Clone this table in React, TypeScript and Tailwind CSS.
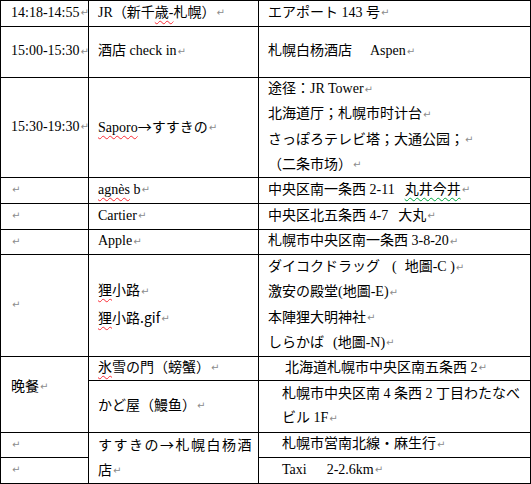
import React from 'react';
import clsx from 'clsx';

// paragraph mark, as Word shows it
const P = () => (
  <span className="ml-[1px] text-[10px] text-[#8c8c8c] font-['DejaVu_Sans',sans-serif] align-middle">↵</span>
);

const Red = ({ children }: { children: React.ReactNode }) => (
  <span className="underline decoration-wavy decoration-red-500 decoration-1 underline-offset-[3px]">{children}</span>
);

const Green = ({ children }: { children: React.ReactNode }) => (
  <span className="underline decoration-wavy decoration-green-600 decoration-1 underline-offset-[3px]">{children}</span>
);

const Gap = ({ w }: { w: string }) => <span className={clsx('inline-block', w)} />;

const Cell = ({ children, className }: { children?: React.ReactNode; className?: string }) => (
  <div className={clsx('bg-white flex items-center pl-[9px] overflow-hidden', className)}>
    <div className="whitespace-pre leading-[24.6px]">{children}</div>
  </div>
);

const cjk = "font-['Noto_Sans_CJK_JP',sans-serif]";

export default function App() {
  return (
    <div className="w-[531px] h-[484px] bg-white text-[14px] text-black font-['Liberation_Serif','Noto_Sans_CJK_JP',serif]">
      <div className="grid grid-cols-[87px_169px_271px] grid-rows-[25px_50px_99px_25px_25px_24px_101px_23px_51px_24px_25px] gap-px bg-black p-px">
        <Cell className="pl-[10px]">14:18-14:55<P /></Cell>
        <Cell>JR（新千<Red>歳-</Red>札幌）<P /></Cell>
        <Cell>エアポート 143 号<P /></Cell>

        <Cell className="pl-[10px]">15:00-15:30<P /></Cell>
        <Cell>酒店 check in<P /></Cell>
        <Cell>札幌白杨酒店<Gap w="w-[18px]" />Aspen<P /></Cell>

        <Cell className="pl-[10px]">15:30-19:30<P /></Cell>
        <Cell><Red>Saporo</Red><span className={cjk}>→</span>すすきの<P /></Cell>
        <Cell>
          <div>途径：JR Tower<P /></div>
          <div>北海道厅；札幌市时计台<P /></div>
          <div>さっぽろテレビ塔；大通公园；<P /></div>
          <div>（二条市场）<P /></div>
        </Cell>

        <Cell className="pl-[10px]"><P /></Cell>
        <Cell><Red>agnès</Red> b<P /></Cell>
        <Cell>中央区南一条西 2-11<Gap w="w-[10px]" /><Green>丸井今井</Green><P /></Cell>

        <Cell className="pl-[10px]"><P /></Cell>
        <Cell>Cartier<P /></Cell>
        <Cell>中央区北五条西 4-7<Gap w="w-[10px]" />大丸<P /></Cell>

        <Cell className="pl-[10px]"><P /></Cell>
        <Cell>Apple<P /></Cell>
        <Cell>札幌市中央区南一条西 3-8-20<P /></Cell>

        <Cell className="pl-[10px]"><P /></Cell>
        <Cell>
          <div><Red>狸</Red>小路<P /></div>
          <div><Red>狸</Red>小路<span className={cjk}>.gif</span><P /></div>
        </Cell>
        <Cell>
          <div>ダイコクドラッグ<Gap w="w-[12px]" />(<Gap w="w-[8px]" />地圖-C )<P /></div>
          <div>激安の殿堂(地圖-E)<P /></div>
          <div>本陣狸大明神社<P /></div>
          <div>しらかば<Gap w="w-[9px]" />(地圖-N)<P /></div>
        </Cell>

        <Cell className="row-span-2 pl-[10px] pb-[14px]">晚餐<P /></Cell>
        <Cell><Red>氷</Red>雪の門（螃蟹）<P /></Cell>
        <Cell className="pl-[26px]">北海道札幌市中央区南五条西 2<P /></Cell>
        <Cell>かど屋（鰻鱼）<P /></Cell>
        <Cell className="pl-[23px]">
          <div>札幌市中央区南 4 条西 2 丁目わたなべ</div>
          <div>ビル 1F<P /></div>
        </Cell>

        <Cell className="pl-[10px]"><P /></Cell>
        <Cell className="row-span-2">
          <div className="tracking-[1.5px]">すすきの<span className={cjk}>→</span>札幌白杨酒</div>
          <div>店<P /></div>
        </Cell>
        <Cell className="pl-[23px]">札幌市営南北線・麻生行<P /></Cell>
        <Cell className="pl-[10px]"><P /></Cell>
        <Cell className="pl-[23px]">Taxi<Gap w="w-[20px]" />2-2.6km<P /></Cell>
      </div>
    </div>
  );
}
